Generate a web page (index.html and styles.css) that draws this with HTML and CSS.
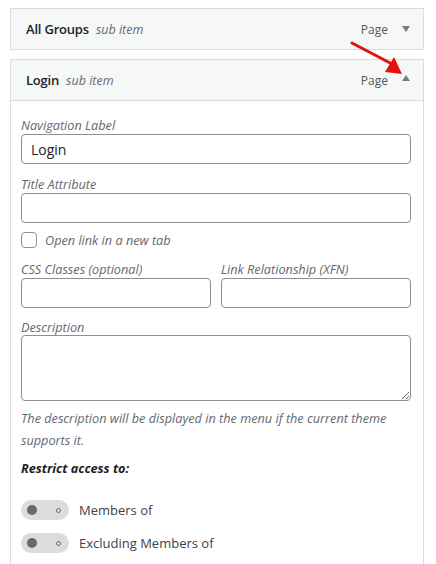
FILE: index.html
```html
<!DOCTYPE html>
<html>
<head>
<meta charset="utf-8">
<link rel="stylesheet" href="styles.css">
</head>
<body>
<div class="item">
  <div class="item-head">
    <span class="title">All Groups</span><span class="sub">sub item</span>
    <span class="type">Page</span>
    <span class="tri down"></span>
  </div>
</div>
<div class="item open">
  <div class="item-head">
    <span class="title">Login</span><span class="sub">sub item</span>
    <span class="type">Page</span>
    <span class="tri up"></span>
  </div>
  <div class="item-body">
    <label class="field">
      <span class="lbl">Navigation Label</span>
      <input class="inp" type="text" value="Login">
    </label>
    <label class="field">
      <span class="lbl">Title Attribute</span>
      <input class="inp" type="text">
    </label>
    <label class="check"><span class="box"></span><span class="lbl">Open link in a new tab</span></label>
    <div class="two">
      <label class="field">
        <span class="lbl">CSS Classes (optional)</span>
        <input class="inp" type="text">
      </label>
      <label class="field">
        <span class="lbl">Link Relationship (XFN)</span>
        <input class="inp" type="text">
      </label>
    </div>
    <label class="field">
      <span class="lbl">Description</span>
      <textarea class="inp ta"></textarea>
    </label>
    <p class="hint">The description will be displayed in the menu if the current theme supports it.</p>
    <p class="restrict">Restrict access to:</p>
    <div class="toggle-row"><span class="toggle"><span class="knob"></span><span class="ring"></span></span><span class="tlabel">Members of</span></div>
    <div class="toggle-row second"><span class="toggle"><span class="knob"></span><span class="ring"></span></span><span class="tlabel">Excluding Members of</span></div>
  </div>
  <svg class="arrow" width="70" height="45" viewBox="0 0 70 45">
    <line x1="2" y1="2" x2="44" y2="24" stroke="#e8100c" stroke-width="3" stroke-linecap="round"/>
    <polygon points="52,33 35,31 44,16" fill="#e8100c"/>
  </svg>
</div>
</body>
</html>
```
FILE: styles.css
```css
html, body { margin: 0; padding: 0; background: #fff; }
body {
  font-family: "Open Sans", "Noto Sans", sans-serif;
  font-size: 13px;
  color: #1d2327;
  padding: 8px 12px 0 10px;
  width: 414px;
  box-sizing: content-box;
}
.item {
  border: 1px solid #dcdcde;
  background: #f6f7f7;
  position: relative;
}
.item + .item { margin-top: 9px; }
.item.open { border-bottom: none; }
.item-head {
  height: 40px;
  display: flex;
  align-items: center;
  padding: 0 13px 0 15px;
}
.item.open .item-head { border-bottom: 1px solid #dcdcde; }
.title { font-weight: 600; font-size: 13px; letter-spacing: -0.2px; }
.sub { font-style: italic; color: #646970; margin-left: 7px; font-size: 12.5px; }
.type { margin-left: auto; color: #50575e; font-size: 12px; margin-right: 14px; }
.tri { width: 0; height: 0; border-left: 4px solid transparent; border-right: 4px solid transparent; }
.tri.down { border-top: 6px solid #787c82; }
.tri.up { border-bottom: 6px solid #787c82; margin-top: -4px; }
.item-body {
  background: #fff;
  padding: 15px 12px 14px 10px;
}
.field { display: flex; flex-direction: column; margin-bottom: 11px; min-width: 0; }
.lbl { font-style: italic; color: #646970; line-height: 18px; font-size: 12.7px; }
.inp {
  box-sizing: border-box;
  width: 100%;
  height: 30px;
  border: 1px solid #8c8f94;
  border-radius: 4px;
  padding: 0 9px;
  font-family: inherit;
  font-size: 14px;
  color: #1d2327;
  background: #fff;
  margin: 0;
}
.ta { height: 66px; resize: vertical; }
.check { display: flex; align-items: center; height: 18px; margin: -3px 0 11px; }
.check .box {
  width: 16px; height: 16px; box-sizing: border-box;
  border: 1px solid #8c8f94; border-radius: 4px; margin-right: 8px;
}
.two { display: grid; grid-template-columns: minmax(0, 1fr) minmax(0, 1fr); column-gap: 10px; }
.two .field { margin-bottom: 10px; }
.ta { margin-top: -1px; }
.hint { margin: -5px 0 8px; font-style: italic; color: #646970; line-height: 22px; font-size: 12.7px; }
.restrict { margin: 0 0 23px; font-style: italic; font-weight: 700; line-height: 18px; font-size: 12.7px; }
.toggle-row { display: flex; align-items: center; height: 20px; }
.toggle-row.second { margin-top: 13px; }
.toggle {
  width: 48px; height: 20px; border-radius: 10px; background: #dcdcde;
  display: flex; align-items: center; position: relative; margin-right: 10px;
}
.knob { width: 10px; height: 10px; border-radius: 50%; background: #646970; margin-left: 6px; }
.ring { width: 5px; height: 5px; box-sizing: border-box; border: 1px solid #646970; border-radius: 50%; margin-left: 19px; }
.tlabel { color: #3c434a; font-size: 13px; }
.arrow { position: absolute; top: -19px; left: 339px; }
```
